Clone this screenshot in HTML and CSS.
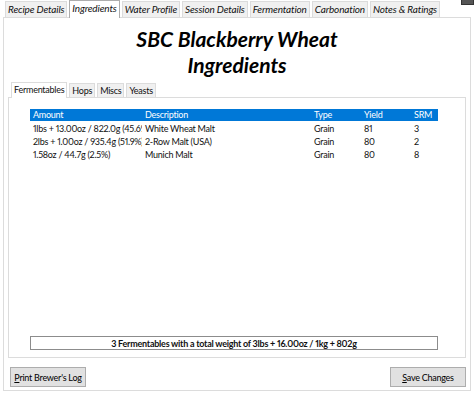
FILE: index.html
```html
<!DOCTYPE html>
<html lang="en">
  <head>
    <meta charset="UTF-8" />
    <title>SBC Blackberry Wheat - Ingredients</title>
    <link rel="stylesheet" href="styles.css">
  </head>
  <body>
    <div class="corner-box"></div>
    <div class="tab-strip">
      <span class="tab">Recipe Details</span>
      <span class="tab tab-selected">Ingredients</span>
      <span class="tab">Water Profile</span>
      <span class="tab">Session Details</span>
      <span class="tab">Fermentation</span>
      <span class="tab">Carbonation</span>
      <span class="tab">Notes &amp; Ratings</span>
    </div>
    <div class="page">
      <p class="title">SBC Blackberry Wheat<br>Ingredients</p>

      <div class="sub-tabs">
        <span class="sub-tab sub-tab-selected">Fermentables</span>
        <span class="sub-tab">Hops</span>
        <span class="sub-tab">Miscs</span>
        <span class="sub-tab">Yeasts</span>
      </div>
      <div class="sub-panel">
        <div class="grid">
          <div class="row head">
            <span class="c-amount">Amount</span>
            <span class="c-desc">Description</span>
            <span class="c-type">Type</span>
            <span class="c-yield">Yield</span>
            <span class="c-srm">SRM</span>
          </div>
          <div class="row">
            <span class="c-amount">1lbs + 13.00oz / 822.0g (45.6%)</span>
            <span class="c-desc">White Wheat Malt</span>
            <span class="c-type">Grain</span>
            <span class="c-yield">81</span>
            <span class="c-srm">3</span>
          </div>
          <div class="row">
            <span class="c-amount">2lbs + 1.00oz / 935.4g (51.9%)</span>
            <span class="c-desc">2-Row Malt (USA)</span>
            <span class="c-type">Grain</span>
            <span class="c-yield">80</span>
            <span class="c-srm">2</span>
          </div>
          <div class="row">
            <span class="c-amount">1.58oz / 44.7g (2.5%)</span>
            <span class="c-desc">Munich Malt</span>
            <span class="c-type">Grain</span>
            <span class="c-yield">80</span>
            <span class="c-srm">8</span>
          </div>
        </div>
        <div class="summary">3 Fermentables with a total weight of 3lbs + 16.00oz / 1kg + 802g</div>
      </div>

      <div class="buttons">
        <button class="win-button"><u>P</u>rint Brewer's Log</button>
        <button class="win-button"><u>S</u>ave Changes</button>
      </div>
    </div>
  </body>
</html>
```
FILE: styles.css
```css
body{
  margin: 0;
  background-color: white;
  color: #111;
  font-family: Lato, "Open Sans", sans-serif;
  font-size: 9px;
  letter-spacing: -0.25px;
  font-variant-numeric: proportional-nums;
  width: 474px;
  height: 395px;
  overflow: hidden;
  position: relative;
}
.corner-box{
  position: absolute;
  right: 0;
  top: -4px;
  width: 11px;
  height: 7px;
  border: 1px solid #333;
  background-color: #555;
}
.tab-strip{
  display: flex;
  padding: 6px 0 0 5px;
  height: 17px;
  box-sizing: border-box;
  align-items: flex-end;
}
.tab{
  font-style: italic;
  font-size: 10px;
  letter-spacing: -0.15px;
  line-height: 14px;
  height: 15px;
  padding: 0 2px;
  margin-right: 2px;
  background-color: #f0f0f0;
  border: 1px solid #dcdcdc;
  border-bottom: none;
  color: #111;
  white-space: nowrap;
}
.tab-selected{
  background-color: white;
  border-color: #adadad;
  height: 17px;
  margin-top: -2px;
  position: relative;
  top: 1px;
}
.page{
  margin: 0 3px;
  height: 372px;
  border: 1px solid #dcdcdc;
  display: flex;
  flex-direction: column;
}
.title{
  margin: 8px 0 0 0;
  text-align: center;
  font-size: 21px;
  letter-spacing: 0;
  font-weight: bold;
  font-style: italic;
  line-height: 26px;
  color: black;
}
.sub-tabs{
  display: flex;
  margin: 4px 0 0 7px;
  height: 15px;
  align-items: flex-end;
}
.sub-tab{
  line-height: 13px;
  height: 13px;
  padding: 0 2px;
  margin-right: 2px;
  background-color: #f0f0f0;
  border: 1px solid #dcdcdc;
  border-bottom: none;
}
.sub-tab-selected{
  background-color: white;
  height: 15px;
  padding: 0 2px;
  position: relative;
  top: 1px;
}
.sub-panel{
  margin: 0 4px;
  height: 261px;
  border: 1px solid #dcdcdc;
  display: flex;
  flex-direction: column;
  padding: 11px 27px 7px 21px;
  box-sizing: border-box;
}
.grid{
  flex: 1;
}
.row{
  display: flex;
  height: 13px;
  line-height: 13px;
  white-space: nowrap;
}
.row span{
  overflow: hidden;
  padding-left: 3px;
  box-sizing: border-box;
}
.head{
  background-color: #0078d7;
  color: white;
  height: 12px;
  line-height: 12px;
  margin-bottom: 1px;
}
.c-amount{ width: 112px; }
.c-desc{ width: 169px; }
.c-type{ width: 50px; }
.c-yield{ width: 50px; }
.c-srm{ width: 26px; }
.summary{
  border: 1px solid #8c8c8c;
  height: 14px;
  line-height: 13px;
  text-align: center;
  font-weight: bold;
  box-sizing: border-box;
}
.buttons{
  display: flex;
  justify-content: space-between;
  padding: 9px 4px 0 6px;
}
.win-button{
  font-family: Lato, "Open Sans", sans-serif;
  font-size: 9px;
  letter-spacing: -0.25px;
  width: 76px;
  height: 20px;
  padding: 0;
  white-space: nowrap;
  background-color: #e1e1e1;
  border: 1px solid #adadad;
  color: black;
}
```
